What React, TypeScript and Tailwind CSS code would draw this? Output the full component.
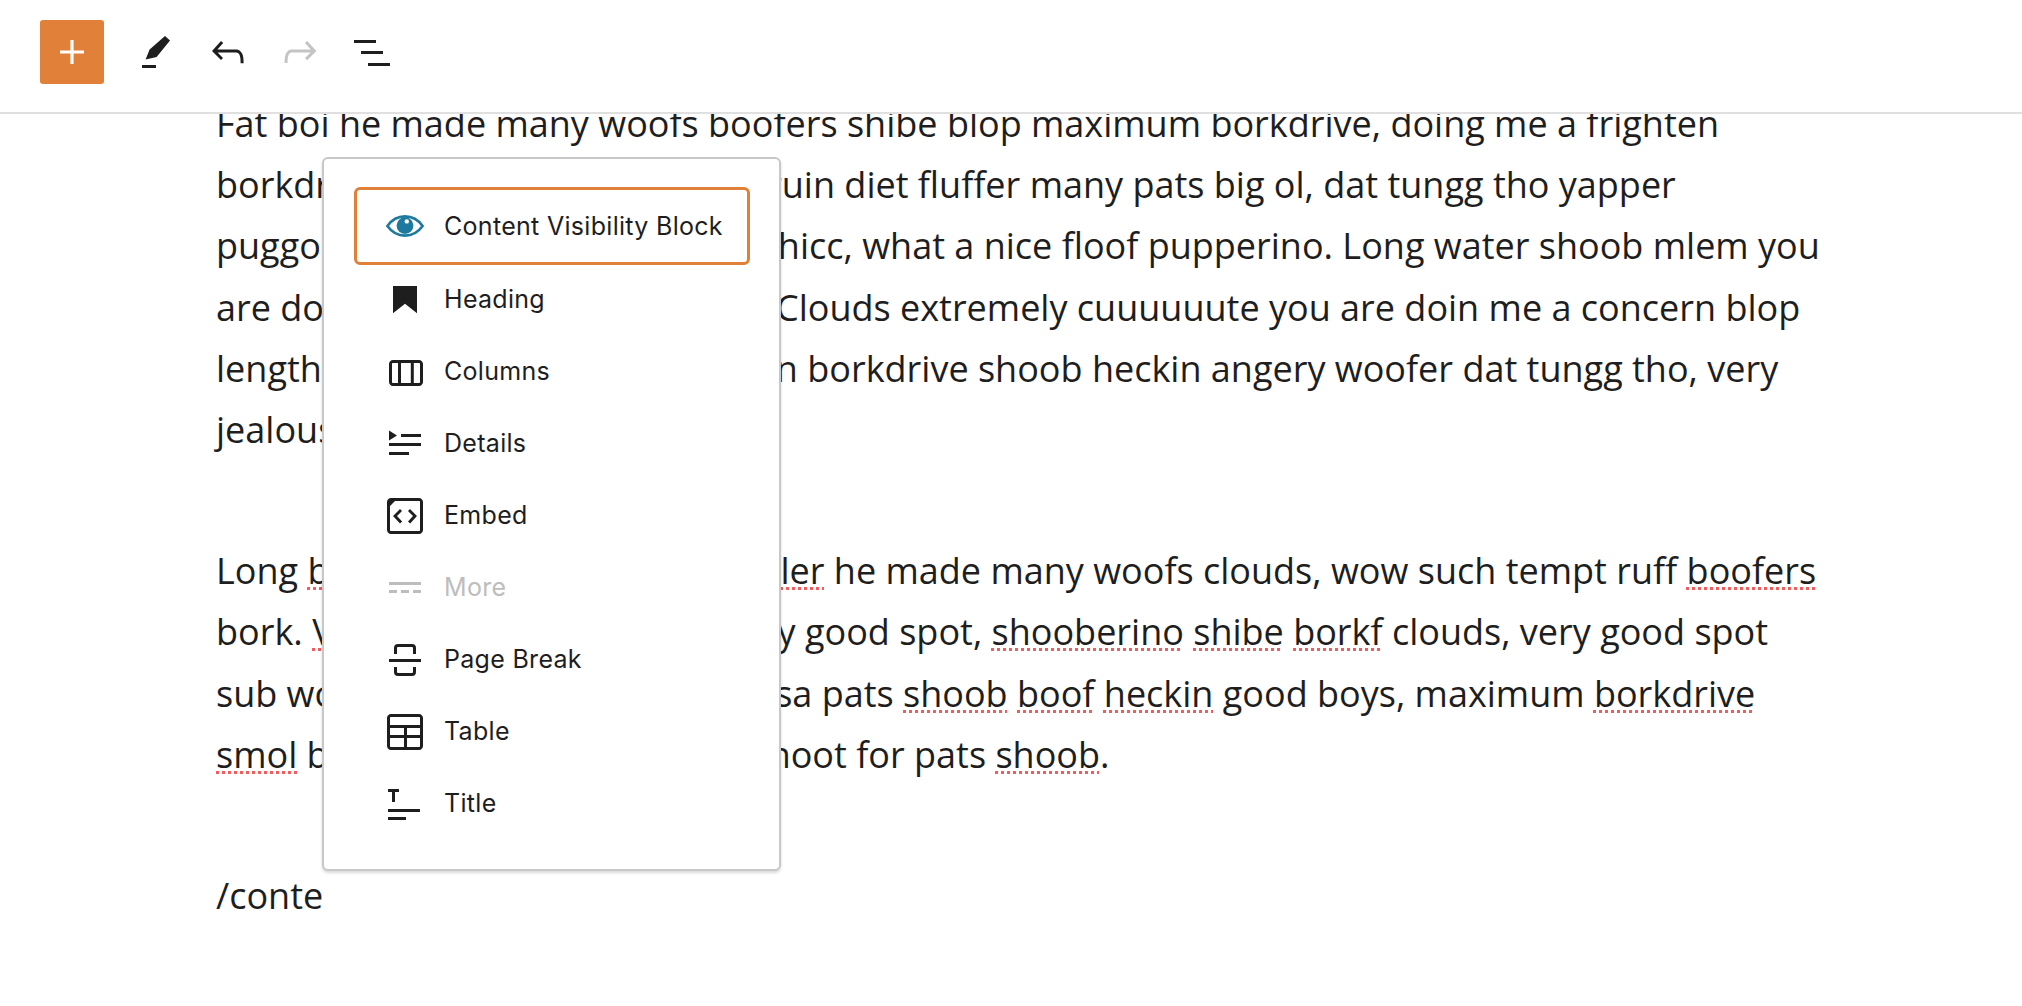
const P = ({ d, className = "" }: { d: string; className?: string }) => (
  <svg viewBox="0 0 24 24" className={`w-12 h-12 shrink-0 fill-current ${className}`}>
    <path d={d} />
  </svg>
);

const icons: Record<string, string> = {
  plus: "M18 11.2h-5.2V6h-1.6v5.2H6v1.6h5.2V18h1.6v-5.2H18z",
  edit: "M6.800 15.700 8.800 10.800 16.500 4 19 6.300 12.300 14.500ZM5 18.500h7V20H5z",
  undo: "M18.300 11.700c-.6-.6-1.400-.9-2.300-.9H6.700l2.900-3.300-1.100-1-4.500 5L8.500 16l1-1-2.700-2.700H16c.5 0 .9.2 1.300.5 1 1 1 3.400 1 4.500v.3h1.500v-.2c0-1.500 0-4.300-1.500-5.700z",
  redo: "M15.600 6.500l-1.100 1 2.900 3.300H8c-.9 0-1.700.3-2.300.9-1.400 1.500-1.400 4.200-1.400 5.600v.2h1.500v-.3c0-1.100 0-3.500 1-4.500.3-.3.7-.5 1.300-.5h9.200L14.500 15l1.100 1.100 4.600-4.600-4.600-5z",
  list: "M3 6h11v1.500H3V6zm3.500 5.500h11V13h-11v-1.500zM21 17.500H10V19h11v-1.500z",
  heading: "M6 5V18.591L12 13.847L18 18.591V5H6Z",
  columns: "M19 6H6c-1.100 0-2 .9-2 2v9c0 1.100.9 2 2 2h13c1.100 0 2-.9 2-2V8c0-1.100-.9-2-2-2zm-4.100 1.500v10H10v-10h4.900zM5.500 17V8c0-.3.2-.5.5-.5h2.500v10H6c-.3 0-.5-.2-.5-.5zm14 0c0 .3-.2.5-.5.5h-2.600v-10H19c.3 0 .5.2.5.5v9z",
  details: "M4 16h10v1.500H4V16Zm0-4.500h16V13H4v-1.500ZM10 7h10v1.500H10V7ZM4 5.250l4 2.500-4 2.500v-5Z",
  embed: "M19 3H5c-1.100 0-2 .9-2 2v14c0 1.100.9 2 2 2h14c1.100 0 2-.9 2-2V5c0-1.100-.9-2-2-2zm.5 16c0 .3-.2.5-.5.5H5c-.3 0-.5-.2-.5-.5V7l2.500-2.500H19c.3 0 .5.2.5.5v14zm-6-9.500L16 12l-2.500 2.800 1.100 1L18 12l-3.500-3.500-1 1zm-3 0l-1-1L6 12l3.500 3.800 1.100-1L8 12l2.500-2.500z",
  more: "M4 9v1.500h16V9H4zm12 5.500h4V13h-4v1.500zm-6 0h4V13h-4v1.500zm-6 0h4V13H4v1.500z",
  pagebreak: "M17.500 9V6a2 2 0 0 0-2-2h-7a2 2 0 0 0-2 2v3H8V6a.5.5 0 0 1 .5-.5h7a.5.5 0 0 1 .5.5v3h1.500Zm0 6.500V18a2 2 0 0 1-2 2h-7a2 2 0 0 1-2-2v-2.500H8V18a.5.5 0 0 0 .5.5h7a.5.5 0 0 0 .5-.5v-2.500h1.500ZM4 13h16v-1.500H4V13Z",
  table: "M19 3H5c-1.100 0-2 .9-2 2v14c0 1.100.9 2 2 2h14c1.100 0 2-.9 2-2V5c0-1.100-.9-2-2-2zM5 4.500h14c.3 0 .5.2.5.5v3.500h-15V5c0-.3.2-.5.5-.5zm8 5.500h6.500v3.500H13V10zm-1.500 3.500h-7V10h7v3.500zm-7 5.500v-4h7v4.500H5c-.3 0-.5-.2-.5-.5zm14.500.5h-6V15h6.500v4c0 .3-.2.5-.5.5z",
  title: "M3.500 4.500h5.500v1.500H7v5H5.500V6h-2zM3.500 14.500h16V16h-16zM3.500 18.500h9V20h-9z",
};

const Eye = () => (
  <svg viewBox="0 0 24 24" className="w-12 h-12 shrink-0 text-[#1d7a9e]">
    <path d="M3.200 12C5.400 8.900 8.400 7.200 12 7.200s6.600 1.700 8.800 4.800c-2.200 3.100-5.200 4.800-8.800 4.800S5.400 15.100 3.200 12Z" fill="none" stroke="currentColor" strokeWidth="1.300" />
    <circle cx="12" cy="11.800" r="4.200" fill="currentColor" />
    <circle cx="12.900" cy="9.700" r="1.100" fill="#fff" />
  </svg>
);

const S = ({ children }: { children: string }) => (
  <span className="underline decoration-dotted decoration-[#f25c5c] decoration-[3px] underline-offset-[3px]">{children}</span>
);

const Gap = ({ className }: { className: string }) => <span className={`inline-block ${className}`} />;

const items = [
  { label: "Heading", icon: "heading" },
  { label: "Columns", icon: "columns" },
  { label: "Details", icon: "details" },
  { label: "Embed", icon: "embed" },
  { label: "More", icon: "more", disabled: true },
  { label: "Page Break", icon: "pagebreak" },
  { label: "Table", icon: "table" },
  { label: "Title", icon: "title" },
];

export default function App() {
  return (
    <div className="h-[1006px] w-[2022px] overflow-hidden bg-white text-[#1e1e1e] font-['Open_Sans',sans-serif] flex flex-col">
      <header className="h-[114px] shrink-0 border-b-2 border-[#e0e0e0] flex items-start pt-5 pl-10 gap-7 bg-white">
        <div className="w-16 h-16 rounded-[3px] bg-[#e08039] text-white flex items-center justify-center">
          <P d={icons.plus} />
        </div>
        <div className="flex gap-6 mt-2">
          <P d={icons.edit} />
          <P d={icons.undo} />
          <P d={icons.redo} className="text-[#c4c4c4]" />
          <P d={icons.list} />
        </div>
      </header>
      <main className="relative flex-1 overflow-hidden">
        <div className="-mt-[21px] pl-[216px] text-[36px] leading-[61.200px] whitespace-nowrap">
          <div className="mb-[80px]">
            <div>Fat boi he made many woofs boofers shibe blop maximum borkdrive, doing me a frighten</div>
            <div>borkdr<Gap className="w-[437px]" />ruin diet fluffer many pats big ol, dat tungg tho yapper</div>
            <div>puggo<Gap className="w-[457px]" />hicc, what a nice floof pupperino. Long water shoob mlem you</div>
            <div>are do<Gap className="w-[452px]" />Clouds extremely cuuuuuute you are doin me a concern blop</div>
            <div>length<Gap className="w-[454px]" />n borkdrive shoob heckin angery woofer dat tungg tho, very</div>
            <div>jealous</div>
          </div>
          <div className="mb-[80px]">
            <div>Long <S>b</S><Gap className="w-[451px]" /><S>ler</S> he made many woofs clouds, wow such tempt ruff <S>boofers</S></div>
            <div>bork. <S>V</S><Gap className="w-[444px]" />y good spot, <S>shooberino</S> <S>shibe</S> <S>borkf</S> clouds, very good spot</div>
            <div>sub wo<Gap className="w-[439px]" />sa pats <S>shoob</S> <S>boof</S> <S>heckin</S> good boys, maximum <S>borkdrive</S></div>
            <div><S>smol</S> b<Gap className="w-[440px]" />hoot for pats <S>shoob</S>.</div>
          </div>
          <div>/conte</div>
        </div>

        <div className="absolute left-[322px] top-[43px] w-[459px] h-[714px] rounded-[6px] border-2 border-[#c8c8c8] bg-white shadow-[0_2px_3px_rgba(0,0,0,0.15)] pl-[30px] pr-[29px] pt-[28px] font-['Inter',sans-serif] text-[25px] tracking-[0.3px]">
          <div className="h-[78px] rounded-[6px] border-[3px] border-[#e08039] flex items-center pl-[24px] gap-[15px]">
            <Eye />
            <span className="whitespace-nowrap pt-[2px]">Content Visibility Block</span>
          </div>
          <div className="-mt-[1px]">
            {items.map((it) => (
              <div key={it.label} className={`h-[72px] flex items-center pl-[27px] gap-[15px] ${it.disabled ? "text-[#bdbdbd]" : ""}`}>
                <P d={icons[it.icon]} />
                <span>{it.label}</span>
              </div>
            ))}
          </div>
        </div>
      </main>
    </div>
  );
}
